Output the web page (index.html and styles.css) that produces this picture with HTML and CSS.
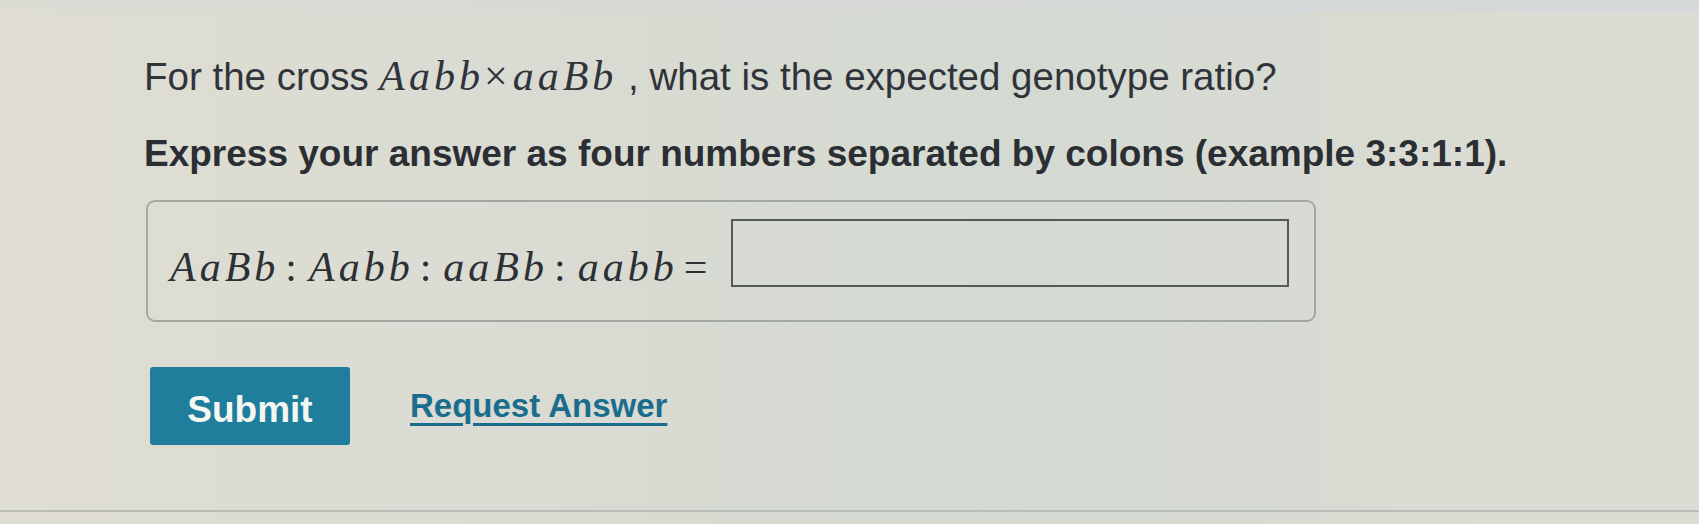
FILE: index.html
```html
<!DOCTYPE html>
<html lang="en">
<head>
<meta charset="utf-8">
<title>Genotype ratio question</title>
<link rel="stylesheet" href="styles.css">
</head>
<body>
<div class="topband"></div>
<main class="page">
  <p class="question">For the cross <span class="math"><i>Aabb</i><span class="times">×</span><i>aaBb</i></span> , what is the expected genotype ratio?</p>
  <p class="instruction">Express your answer as four numbers separated by colons (example 3:3:1:1).</p>
  <div class="answer-box">
    <div class="answer-row">
      <span class="math eq"><i>AaBb</i><span class="rel">:</span><i>Aabb</i><span class="rel">:</span><i>aaBb</i><span class="rel">:</span><i>aabb</i><span class="rel last">=</span></span>
      <span class="input" aria-label="answer"></span>
    </div>
  </div>
  <div class="actions">
    <button class="submit" type="button">Submit</button>
    <a class="request" href="#">Request Answer</a>
  </div>
</main>
<div class="bottomline"></div>
</body>
</html>
```

FILE: styles.css
```css
html, body {
  margin: 0;
  padding: 0;
}

body {
  width: 1699px;
  height: 524px;
  overflow: hidden;
  background: linear-gradient(90deg, #dfddd4 0%, #d9dbd2 35%, #d4dad2 60%, #d9dbd3 80%, #dddcd4 100%);
  font-family: "Liberation Sans", Arial, sans-serif;
  color: #2f3337;
}

.topband {
  height: 13px;
  background: linear-gradient(90deg, #dcdbd4 0%, #d6d9d6 50%, #d5d9d9 100%);
}

.page {
  display: flex;
  flex-direction: column;
  align-items: flex-start;
  padding: 42px 0 0 144px;
}

.question {
  margin: 0;
  font-size: 38.5px;
  line-height: 44px;
  color: #30343a;
  white-space: nowrap;
}

.math {
  font-family: "Liberation Serif", "Times New Roman", serif;
  font-size: 42px;
  line-height: 40px;
  letter-spacing: 4px;
}

.math i {
  font-style: italic;
}

.times {
  font-style: normal;
  margin: 0 1px 0 0;
}

.instruction {
  margin: 33px 0 0 0;
  font-size: 37px;
  line-height: 44px;
  font-weight: 700;
  color: #2b2f33;
  white-space: nowrap;
}

.answer-box {
  box-sizing: border-box;
  margin: 24px 0 0 2px;
  width: 1170px;
  height: 122px;
  border: 2px solid #a4a8a3;
  border-radius: 9px;
  padding: 17px 25px 0 22px;
}

.answer-row {
  display: flex;
  align-items: flex-end;
  justify-content: space-between;
}

.eq {
  display: inline-flex;
  align-items: baseline;
  color: #2c3034;
  letter-spacing: 4px;
}

.rel {
  font-style: normal;
  letter-spacing: 0;
  margin: 0 12px 0 6px;
}

.rel.last {
  margin-right: 0;
}

.input {
  box-sizing: border-box;
  width: 558px;
  height: 68px;
  border: 2px solid #55595a;
  background: transparent;
}

.actions {
  display: flex;
  align-items: center;
  gap: 60px;
  margin: 45px 0 0 6px;
}

.submit {
  box-sizing: border-box;
  width: 200px;
  height: 78px;
  border: none;
  border-radius: 3px;
  background: #1f7e9c;
  color: #f4f6f2;
  font-family: "Liberation Sans", Arial, sans-serif;
  font-size: 37px;
  font-weight: 700;
  padding: 8px 0 0 0;
}

.request {
  font-size: 33px;
  font-weight: 700;
  color: #1a6d8c;
  text-decoration: underline;
  text-underline-offset: 6px;
  text-decoration-thickness: 3px;
}

.bottomline {
  margin-top: 65px;
  height: 2px;
  background: #b9bdb7;
}
```
